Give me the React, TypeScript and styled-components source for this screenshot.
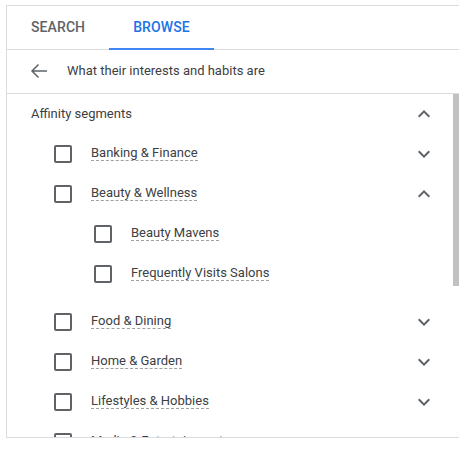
import styled, { createGlobalStyle } from "styled-components";

const GlobalStyle = createGlobalStyle`
  html, body {
    margin: 0;
    background: #ffffff;
    overflow: hidden;
  }
  body {
    padding: 5px 0 0 6px;
    font-family: Roboto, "Liberation Sans", Arial, sans-serif;
  }
`;

const Panel = styled.div`
  width: 454px;
  height: 433px;
  box-sizing: border-box;
  border: 1px solid #dadce0;
  display: flex;
  flex-direction: column;
  overflow: hidden;
  background: #ffffff;
`;

const TabBar = styled.div`
  display: flex;
  height: 44px;
  box-sizing: border-box;
  border-bottom: 1px solid #dadce0;
  flex-shrink: 0;
`;

const Tab = styled.div<{ $active?: boolean }>`
  position: relative;
  display: flex;
  align-items: center;
  padding: 0 24px 2px;
  font-size: 14px;
  font-weight: 500;
  letter-spacing: 0.1px;
  text-transform: uppercase;
  color: ${(p) => (p.$active ? "#1a73e8" : "#5f6368")};

  &::after {
    content: "";
    display: ${(p) => (p.$active ? "block" : "none")};
    position: absolute;
    left: 0;
    right: 0;
    bottom: -1px;
    height: 2px;
    background: #4285f4;
  }
`;

const Breadcrumb = styled.div`
  display: flex;
  align-items: center;
  height: 44px;
  box-sizing: border-box;
  border-bottom: 1px solid #dadce0;
  padding: 0 0 2px 20px;
  flex-shrink: 0;
  font-size: 13px;
  color: #3c4043;
  gap: 16px;
`;

const List = styled.div`
  position: relative;
  flex: 1;
  min-height: 0;
  overflow: hidden;
`;

const ScrollThumb = styled.div`
  position: absolute;
  top: 0;
  right: 0;
  width: 6px;
  height: 192px;
  background: #c1c1c1;
`;

const Row = styled.div<{ $indent: number }>`
  display: flex;
  align-items: center;
  height: 40px;
  box-sizing: border-box;
  padding: 0 23px 2px ${(p) => p.$indent}px;
  font-size: 13px;
  color: #3c4043;
`;

const Group = styled.div`
  padding-bottom: 8px;
`;

const Checkbox = styled.span`
  width: 18px;
  height: 18px;
  box-sizing: border-box;
  border: 2px solid #5f6368;
  border-radius: 2px;
  flex-shrink: 0;
  margin: 2px 19px 0 0;
`;

const Label = styled.span`
  border-bottom: 1px dashed #9aa0a6;
  line-height: 15px;
`;

const Chevron = styled.svg`
  margin: 2px 0 0 auto;
  width: 24px;
  height: 24px;
  fill: #5f6368;
`;

const Down = () => (
  <Chevron viewBox="0 0 24 24">
    <path d="M16.59 8.59L12 13.17 7.41 8.59 6 10l6 6 6-6z" />
  </Chevron>
);

const Up = () => (
  <Chevron viewBox="0 0 24 24">
    <path d="M12 8l-6 6 1.41 1.41L12 10.83l4.59 4.58L18 14z" />
  </Chevron>
);

const BackArrow = () => (
  <svg width="24" height="24" viewBox="0 0 24 24">
    <path
      d="M20 12H5M11.5 5.5L5 12l6.5 6.5"
      fill="none"
      stroke="#5f6368"
      strokeWidth="1.5"
    />
  </svg>
);

const Item = ({ label, indent, open }: { label: string; indent: number; open?: boolean }) => (
  <Row $indent={indent}>
    <Checkbox />
    <Label>{label}</Label>
    {open === true && <Up />}
    {open === false && <Down />}
  </Row>
);

export default function App() {
  return (
    <>
      <GlobalStyle />
      <Panel>
        <TabBar>
          <Tab>Search</Tab>
          <Tab $active>Browse</Tab>
        </TabBar>
        <Breadcrumb>
          <BackArrow />
          <span>What their interests and habits are</span>
        </Breadcrumb>
        <List>
          <Row $indent={24}>
            <span>Affinity segments</span>
            <Up />
          </Row>
          <Item label="Banking & Finance" indent={47} open={false} />
          <Item label="Beauty & Wellness" indent={47} open={true} />
          <Group>
            <Item label="Beauty Mavens" indent={87} />
            <Item label="Frequently Visits Salons" indent={87} />
          </Group>
          <Item label="Food & Dining" indent={47} open={false} />
          <Item label="Home & Garden" indent={47} open={false} />
          <Item label="Lifestyles & Hobbies" indent={47} open={false} />
          <Item label="Media & Entertainment" indent={47} open={false} />
          <ScrollThumb />
        </List>
      </Panel>
    </>
  );
}
